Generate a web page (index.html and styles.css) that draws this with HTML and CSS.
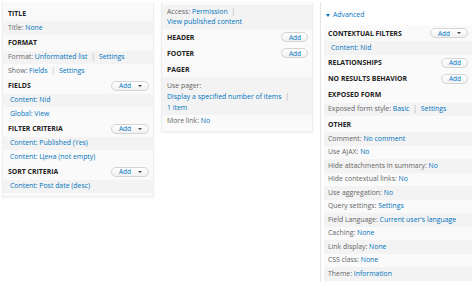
FILE: index.html
```html
<!DOCTYPE html>
<html lang="en">
<head>
    <meta charset="UTF-8">
    <meta name="viewport" content="width=device-width, initial-scale=1.0">
    <title>View settings</title>
    <link rel="stylesheet" href="styles.css">
</head>
<body>
  <div class="views-columns">

    <!-- first column -->
    <div class="column">
      <div class="bucket">
        <div class="bucket-title"><h3>Title</h3></div>
        <div class="row odd"><span class="label">Title:</span> <a href="#">None</a></div>
      </div>
      <div class="bucket">
        <div class="bucket-title"><h3>Format</h3></div>
        <div class="row odd"><span class="label">Format:</span> <a href="#">Unformatted list</a> <span class="sep">|</span> <a href="#">Settings</a></div>
        <div class="row"><span class="label">Show:</span> <a href="#">Fields</a> <span class="sep">|</span> <a href="#">Settings</a></div>
      </div>
      <div class="bucket">
        <div class="bucket-title"><h3>Fields</h3>
          <span class="add-btn"><a href="#">Add</a><span class="caret"></span></span>
        </div>
        <div class="row odd item"><a href="#">Content: Nid</a></div>
        <div class="row item"><a href="#">Global: View</a></div>
      </div>
      <div class="bucket">
        <div class="bucket-title"><h3>Filter criteria</h3>
          <span class="add-btn"><a href="#">Add</a><span class="caret"></span></span>
        </div>
        <div class="row odd item"><a href="#">Content: Published (Yes)</a></div>
        <div class="row item"><a href="#">Content: Цена (not empty)</a></div>
      </div>
      <div class="bucket">
        <div class="bucket-title"><h3>Sort criteria</h3>
          <span class="add-btn"><a href="#">Add</a><span class="caret"></span></span>
        </div>
        <div class="row odd item"><a href="#">Content: Post date (desc)</a></div>
      </div>
    </div>

    <!-- second column -->
    <div class="column col-middle">
      <div class="bucket">
        <div class="row odd"><span class="label">Access:</span> <a href="#">Permission</a> <span class="sep">|</span><br><a href="#">View published content</a></div>
      </div>
      <div class="bucket">
        <div class="bucket-title"><h3>Header</h3>
          <span class="add-btn"><a href="#">Add</a></span>
        </div>
      </div>
      <div class="bucket">
        <div class="bucket-title"><h3>Footer</h3>
          <span class="add-btn"><a href="#">Add</a></span>
        </div>
      </div>
      <div class="bucket">
        <div class="bucket-title"><h3>Pager</h3></div>
        <div class="row odd pager"><span class="label">Use pager:</span><br><a href="#">Display a specified number of items</a> <span class="sep">|</span><br><a href="#">1 item</a></div>
        <div class="row"><span class="label">More link:</span> <a href="#">No</a></div>
      </div>
    </div>

    <!-- third column -->
    <div class="column col-advanced">
      <div class="advanced-toggle"><a href="#"><span class="arrow"></span>Advanced</a></div>
      <div class="bucket">
        <div class="bucket-title"><h3>Contextual filters</h3>
          <span class="add-btn"><a href="#">Add</a><span class="caret"></span></span>
        </div>
        <div class="row odd item"><a href="#">Content: Nid</a></div>
      </div>
      <div class="bucket">
        <div class="bucket-title"><h3>Relationships</h3>
          <span class="add-btn"><a href="#">Add</a></span>
        </div>
      </div>
      <div class="bucket">
        <div class="bucket-title"><h3>No results behavior</h3>
          <span class="add-btn"><a href="#">Add</a></span>
        </div>
      </div>
      <div class="bucket">
        <div class="bucket-title"><h3>Exposed form</h3></div>
        <div class="row odd"><span class="label">Exposed form style:</span> <a href="#">Basic</a> <span class="sep">|</span> <a href="#">Settings</a></div>
      </div>
      <div class="bucket">
        <div class="bucket-title"><h3>Other</h3></div>
        <div class="row odd"><span class="label">Comment:</span> <a href="#">No comment</a></div>
        <div class="row"><span class="label">Use AJAX:</span> <a href="#">No</a></div>
        <div class="row odd"><span class="label">Hide attachments in summary:</span> <a href="#">No</a></div>
        <div class="row"><span class="label">Hide contextual links:</span> <a href="#">No</a></div>
        <div class="row odd"><span class="label">Use aggregation:</span> <a href="#">No</a></div>
        <div class="row"><span class="label">Query settings:</span> <a href="#">Settings</a></div>
        <div class="row odd"><span class="label">Field Language:</span> <a href="#">Current user's language</a></div>
        <div class="row"><span class="label">Caching:</span> <a href="#">None</a></div>
        <div class="row odd"><span class="label">Link display:</span> <a href="#">None</a></div>
        <div class="row"><span class="label">CSS class:</span> <a href="#">None</a></div>
        <div class="row odd"><span class="label">Theme:</span> <a href="#">Information</a></div>
      </div>
    </div>

  </div>
</body>
</html>
```

FILE: styles.css
```css
body {
  margin: 0;
  background-color: #fff;
  font-family: "Open Sans", "Liberation Sans", sans-serif;
  font-size: 6.9px;
  color: #666;
}

a {
  color: #0074bd;
  text-decoration: none;
}

/* Three columns */
.views-columns {
  display: grid;
  grid-template-columns: repeat(3, 1fr);
  gap: 7px;
  padding: 2px 2px 0;
  align-items: start;
}

.column {
  background-color: #fafafa;
  border: 1px solid #eee;
  border-top: none;
  padding: 3px 0 3px;
  box-shadow: 0 1px 2px rgba(0, 0, 0, 0.06);
}

.col-advanced {
  background-color: #fff;
  border: none;
  border-left: 1px solid #e4e4e4;
  box-shadow: none;
  min-height: 280px;
  padding-left: 3px;
}

.col-advanced .bucket {
  background-color: #fafafa;
}

/* Bucket title row */
.bucket-title {
  display: flex;
  align-items: center;
  justify-content: space-between;
  height: 16px;
  padding: 0 4px 0 5px;
}

.col-advanced .bucket-title,
.col-advanced .row {
  padding-left: 4px;
}

.bucket-title h3 {
  margin: 0;
  font-size: 6.9px;
  font-weight: bold;
  text-transform: uppercase;
  color: #222;
}

/* Item rows */
.row {
  padding: 1.5px 5px;
  line-height: 10.5px;
}

.row.odd {
  background-color: #f3f3f3;
}

.row.item {
  padding-left: 7px;
}

.row.pager {
  padding-top: 3px;
  line-height: 11px;
}

.sep {
  color: #aaa;
  margin: 0 2px;
}

/* Add button */
.add-btn {
  display: inline-flex;
  align-items: center;
  height: 8px;
  padding: 0 6px 0 7px;
  border: 1px solid #d4d4d4;
  border-radius: 6px;
  background: linear-gradient(#fff, #f1f1f1);
  font-size: 6.5px;
}

.add-btn .caret {
  display: inline-block;
  margin-left: 7px;
  border-left: 2px solid transparent;
  border-right: 2px solid transparent;
  border-top: 2px solid #444;
}

/* Advanced toggle */
.advanced-toggle {
  height: 20px;
  line-height: 20px;
  padding-left: 2px;
}

.advanced-toggle .arrow {
  display: inline-block;
  margin-right: 3px;
  vertical-align: middle;
  border-left: 2px solid transparent;
  border-right: 2px solid transparent;
  border-top: 3px solid #0074bd;
}
```
